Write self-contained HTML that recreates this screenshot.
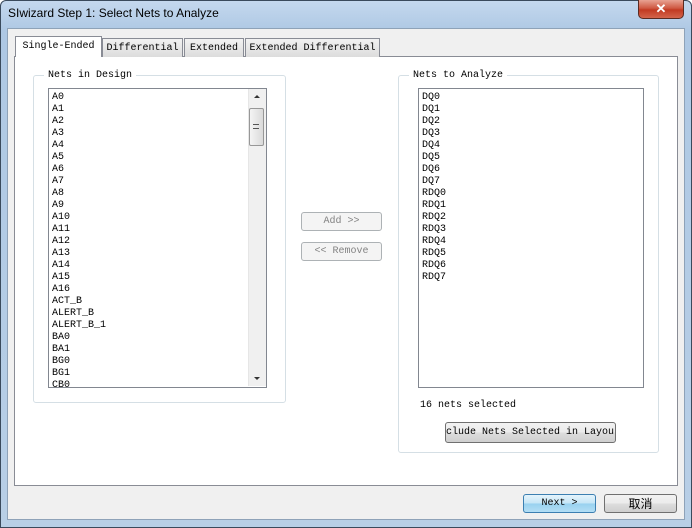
<!DOCTYPE html>
<html><head><meta charset="utf-8"><style>
*{margin:0;padding:0;box-sizing:border-box}
body{width:692px;height:528px;overflow:hidden;background:#fff;position:relative;font-family:"Liberation Mono",monospace;font-size:10px;color:#000}
.a{position:absolute}
#win{left:0;top:0;width:692px;height:528px;border:1px solid #3a4a5c;border-radius:6px 6px 0 0;background:linear-gradient(#c4d8ee,#aec8e4 30px,#b8cfe6);}
#client{left:7px;top:28px;width:678px;height:492px;background:#f0f0f0;border:1px solid #8ea2b8}
.title{left:8px;top:6px;font-family:"Liberation Sans",sans-serif;font-size:12px;color:#000}
#close{left:638px;top:0;width:46px;height:19px;border:1px solid #5b2b22;border-top:none;border-radius:0 0 5px 5px;background:linear-gradient(#e8a393,#cf5a43 45%,#c23a22 55%,#d3644b);color:#fff;font:bold 13px "Liberation Sans",sans-serif;text-align:center;line-height:18px}
#page{left:14px;top:56px;width:664px;height:430px;background:#fff;border:1px solid #898c95}
.tab{top:38px;height:19px;background:linear-gradient(#f2f2f2,#dcdcdc);border:1px solid #898c95;border-bottom:none;line-height:19px;text-align:center}
.grp{border:1px solid #d5dfe5;border-radius:3px}
.lbl{background:#fff;padding:0 4px;line-height:12px}
.list{background:#fff;border:1px solid #828790;line-height:12px;padding:3px 0 0 3px;overflow:hidden}
.btn{border:1px solid #707070;border-radius:3px;background:linear-gradient(#f2f2f2,#ebebeb 50%,#dddddd 51%,#cfcfcf);text-align:center;line-height:18px;overflow:hidden;white-space:nowrap}
.dis{border-color:#adb2b5;background:#f4f4f4;color:#838383}
</style></head><body>
<div id="win" class="a"></div>
<div class="a title">SIwizard Step 1: Select Nets to Analyze</div>
<div id="close" class="a">✕</div>
<div id="client" class="a"></div>
<div id="page" class="a"></div>
<div class="a tab" style="left:102px;width:81px">Differential</div>
<div class="a tab" style="left:184px;width:60px">Extended</div>
<div class="a tab" style="left:245px;width:135px">Extended Differential</div>
<div class="a tab" style="left:15px;top:36px;width:87px;height:21px;background:#fff;line-height:20px">Single-Ended</div>

<div class="a grp" style="left:33px;top:75px;width:253px;height:328px"></div>
<div class="a lbl" style="left:44px;top:70px">Nets in Design</div>
<div class="a list" style="left:48px;top:88px;width:219px;height:300px">A0<br>A1<br>A2<br>A3<br>A4<br>A5<br>A6<br>A7<br>A8<br>A9<br>A10<br>A11<br>A12<br>A13<br>A14<br>A15<br>A16<br>ACT_B<br>ALERT_B<br>ALERT_B_1<br>BA0<br>BA1<br>BG0<br>BG1<br>CB0</div>
<div class="a" style="left:248px;top:89px;width:18px;height:297px;background:#f0f0f0;border-left:1px solid #e6e6e6"></div>
<div class="a" style="left:254px;top:95px;width:0;height:0;border:3px solid transparent;border-bottom:3px solid #333;border-top:none"></div>
<div class="a" style="left:254px;top:377px;width:0;height:0;border:3px solid transparent;border-top:3px solid #333;border-bottom:none"></div>
<div class="a" style="left:249px;top:108px;width:15px;height:38px;border:1px solid #979797;border-radius:2px;background:linear-gradient(90deg,#f4f4f4,#dadada)"></div>
<div class="a" style="left:253px;top:124px;width:6px;height:5px;border-top:1px solid #555;border-bottom:1px solid #555"></div>

<div class="a btn dis" style="left:301px;top:212px;width:81px;height:19px">Add &gt;&gt;</div>
<div class="a btn dis" style="left:301px;top:242px;width:81px;height:19px">&lt;&lt; Remove</div>

<div class="a grp" style="left:398px;top:75px;width:261px;height:378px"></div>
<div class="a lbl" style="left:409px;top:70px">Nets to Analyze</div>
<div class="a list" style="left:418px;top:88px;width:226px;height:300px">DQ0<br>DQ1<br>DQ2<br>DQ3<br>DQ4<br>DQ5<br>DQ6<br>DQ7<br>RDQ0<br>RDQ1<br>RDQ2<br>RDQ3<br>RDQ4<br>RDQ5<br>RDQ6<br>RDQ7</div>
<div class="a" style="left:420px;top:400px">16 nets selected</div>
<div class="a btn" style="left:445px;top:422px;width:171px;height:21px;line-height:20px;display:flex;justify-content:flex-end;padding-right:1px"><span style="flex:none">Include Nets Selected in Layou</span></div>

<div class="a btn" style="left:523px;top:494px;width:73px;height:19px;border-color:#3c7fb1;background:linear-gradient(#e5f4fc,#c4e5f6 50%,#98d1ef 51%,#b3def5)">Next &gt;</div>
<div class="a btn" style="left:604px;top:494px;width:73px;height:19px;font-family:'Liberation Sans','Noto Sans CJK SC',sans-serif;font-size:12px">取消</div>
</body></html>
